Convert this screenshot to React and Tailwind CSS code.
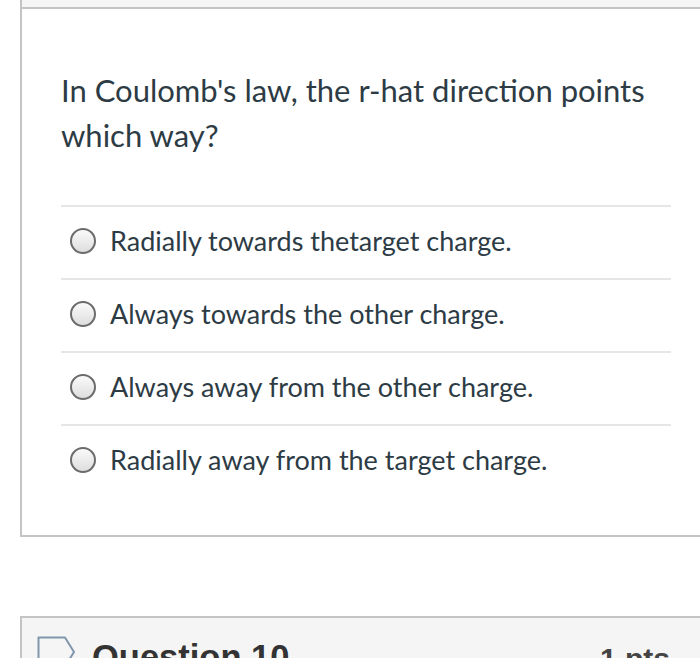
import React from 'react';

const answers = [
  'Radially towards thetarget charge.',
  'Always towards the other charge.',
  'Always away from the other charge.',
  'Radially away from the target charge.',
];

const Radio = () => (
  <span className="w-[26px] h-[26px] rounded-full border-[2px] border-[#6b6b6b] bg-gradient-to-b from-[#fafafa] to-[#dedede] shrink-0" />
);

const App = () => {
  return (
    <div className="w-[700px] h-[672px] overflow-hidden bg-white text-[#2d3b45]" style={{ fontFamily: 'Lato, "Open Sans", sans-serif' }}>
      <div className="ml-[20px] h-[7px] bg-[#f5f5f5] border-l-2 border-[#c4c4c4]" />

      <div className="ml-[20px] w-[700px] border-l-2 border-t-2 border-b-2 border-[#c4c4c4] pl-[39px] pt-[59px] pb-[38px]">
        <p className="text-[31px] leading-[45px] w-[600px]">
          In Coulomb's law, the r-hat direction points which way?
        </p>

        <div className="mt-[47px] w-[610px]">
          {answers.map((a, i) => (
            <div key={i} className="h-[73px] border-t-2 border-[#e6e6e6] flex items-center pl-[9px] gap-[14px] pb-[3px]">
              <Radio />
              <span className="text-[27px]">{a}</span>
            </div>
          ))}
        </div>
      </div>

      <div className="mt-[79px] ml-[20px] w-[700px] h-[42px] overflow-hidden bg-[#f5f5f5] border-l-2 border-t-2 border-[#c4c4c4] text-[#333]" style={{ fontFamily: '"Liberation Sans", Arial, sans-serif' }}>
        <div className="flex items-start pt-[18px] pl-[15px] pr-[50px]">
          <svg width="40" height="34" viewBox="0 0 40 34" className="shrink-0">
            <path d="M1.5 1.5 H28 L37 16 L28 30.5 H1.5 Z" fill="none" stroke="#7f96ad" strokeWidth="2" strokeLinejoin="round" />
          </svg>
          <span className="ml-[15px] text-[34.5px] font-bold leading-none mt-[4px]">Question 10</span>
          <span className="ml-auto text-[30px] font-bold leading-none mt-[8px] text-[#444]">1 pts</span>
        </div>
      </div>
    </div>
  );
};

export default App;
